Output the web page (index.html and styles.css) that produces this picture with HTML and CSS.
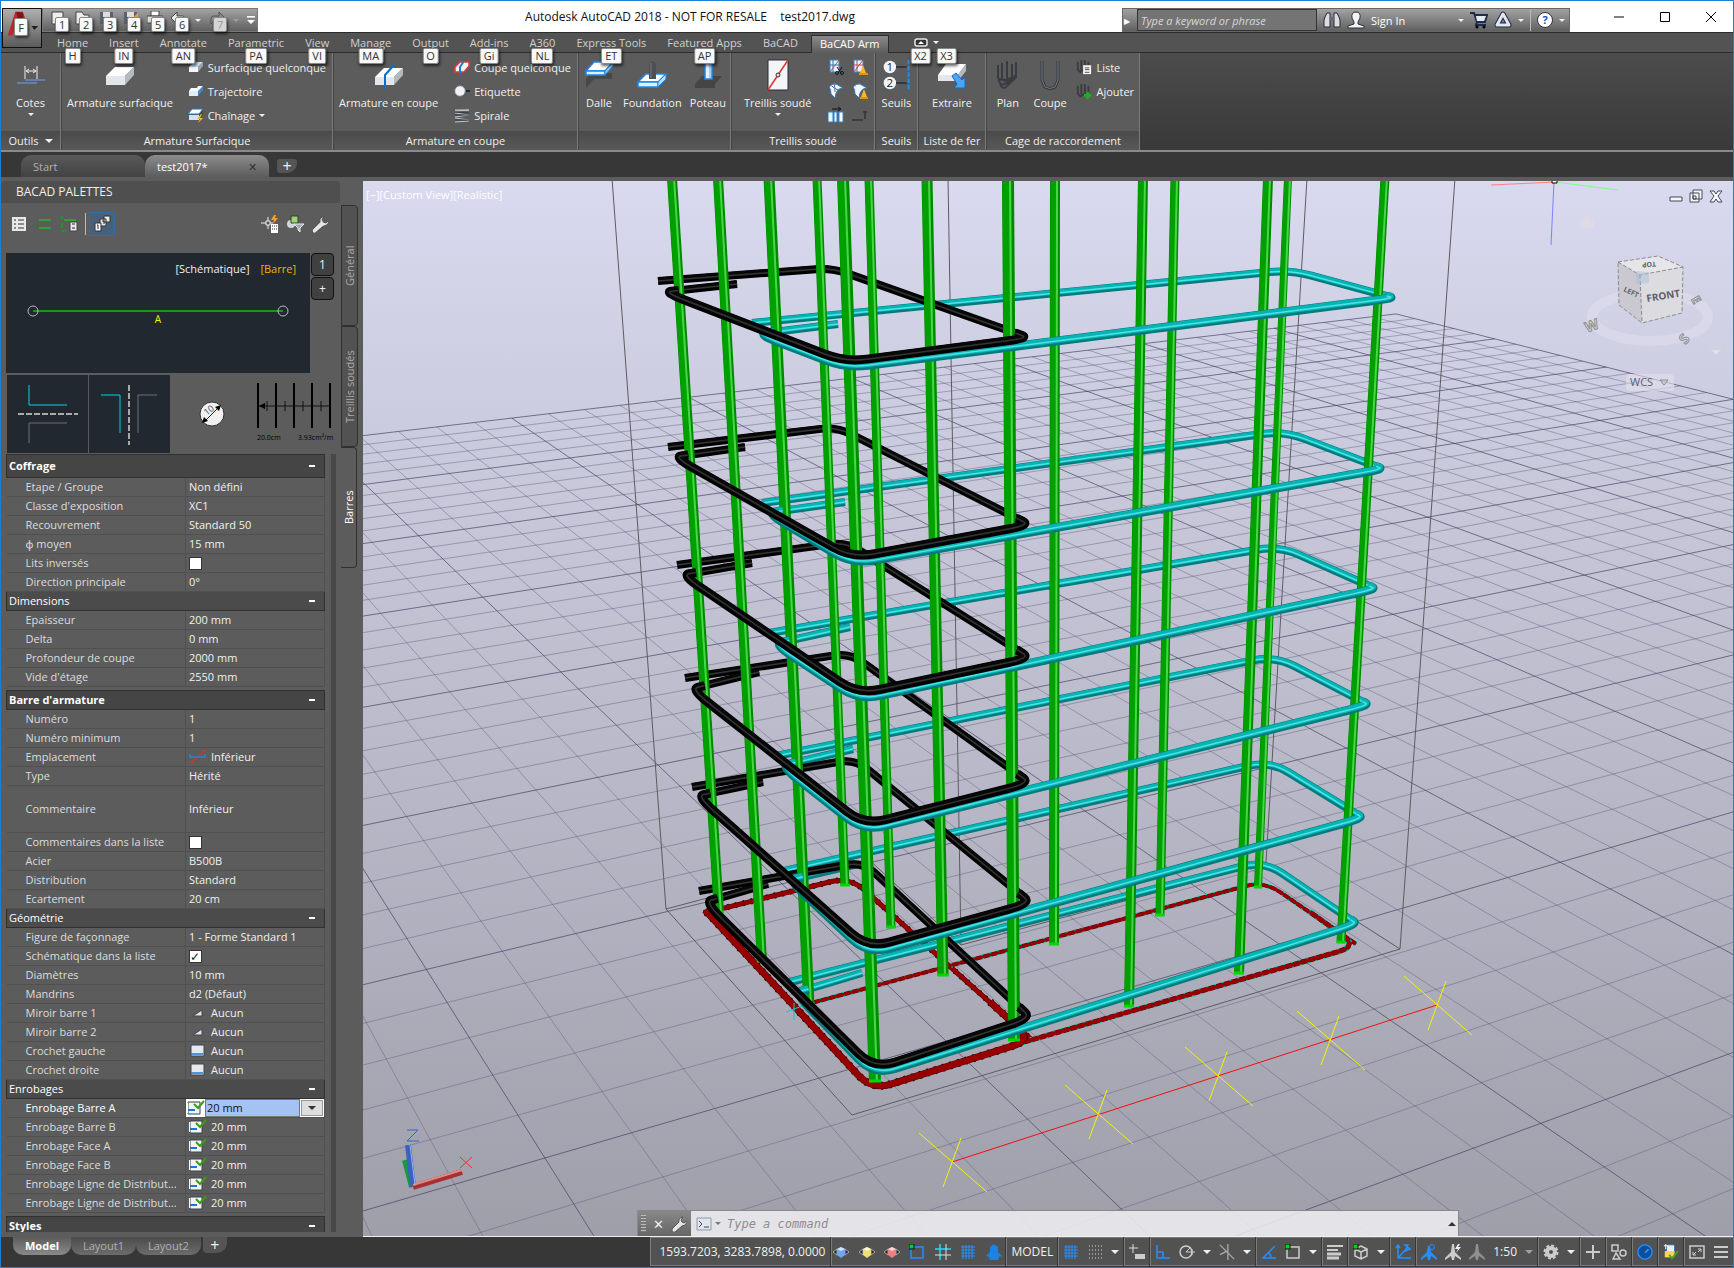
FILE: index.html
```html
<!DOCTYPE html>
<html lang="fr">
<head>
  <meta charset="UTF-8" />
  <meta name="viewport" content="width=device-width, initial-scale=1.0" />
  <title>Autodesk AutoCAD 2018 - test2017.dwg</title>
  <link rel="stylesheet" href="styles.css">
</head>

<body>
  <!-- Icons -->
  <svg class="defs" aria-hidden="true">
    <symbol id="i-slab" viewBox="0 0 32 28"><path d="M2 15l9-9h19l-9 9z" fill="#fdfdfd"/><path d="M2 15h19v9H2z" fill="#e3e6ea"/><path d="M21 15l9-9v8l-9 10z" fill="#b4b9c0"/></symbol>
    <symbol id="i-slabcut" viewBox="0 0 32 28"><path d="M2 16l9-9h19l-9 9z" fill="#fdfdfd"/><path d="M2 16h19v8H2z" fill="#e3e6ea"/><path d="M21 16l9-9v7l-9 10z" fill="#b4b9c0"/><path d="M21 4L12 14v14" fill="none" stroke="#0a6fd0" stroke-width="2"/></symbol>
    <symbol id="i-dim" viewBox="0 0 32 28"><path d="M10 5v13M22 5v13M12 10h8M14 8l-3 2 3 2M18 8l3 2-3 2" fill="none" stroke="#eee"/><path d="M10 19h20M2 22h20" stroke="#6fa0ee" stroke-width="1"/></symbol>
    <symbol id="i-poly" viewBox="0 0 16 16"><path d="M1 8l5-5h9l-5 5z" fill="#c4e2f4"/><path d="M1 8h9v5H1z" fill="#f4f6f8"/><path d="M10 8l5-5v4l-5 6z" fill="#9ba2ab"/></symbol>
    <symbol id="i-traj" viewBox="0 0 16 16"><path d="M1 8l2-3h6l1-2h5l-4 5z" fill="#fff"/><path d="M1 8h9v5H1z" fill="#dcefff"/><path d="M10 8l5-5v4l-5 6z" fill="#4388c8"/></symbol>
    <symbol id="i-chain" viewBox="0 0 16 16"><path d="M0 7l4-5h11l-4 5z" fill="#fff" stroke="#1673c8"/><path d="M1 8h10v5H1z" fill="#cfe5f6"/><path d="M11 8l4-5v4l-4 6z" fill="#3b4655"/><path d="M13 7l-4 5h3l-2 4 5-5h-3l2-4z" fill="#ffb52b"/></symbol>
    <symbol id="i-cutany" viewBox="0 0 16 16"><path d="M1 8l5-5h9v4l-5 6H1z" fill="#f2f2f2" stroke="#e23a3a" stroke-width="1.5"/><path d="M10 2L6 8v7" fill="none" stroke="#1c7ad6" stroke-width="2"/></symbol>
    <symbol id="i-tag" viewBox="0 0 16 16"><circle cx="6" cy="8" r="5" fill="#f0f2f4" stroke="#aeb4bb" stroke-dasharray="2 1"/><path d="M12 8h4" stroke="#222a35" stroke-width="2"/></symbol>
    <symbol id="i-spiral" viewBox="0 0 16 16"><path d="M1 3h14M1 6l14 2M1 10l14-2M1 11l14 2M1 15l14-1M1 4l14-1" stroke="#c4c8cd" fill="none"/><path d="M1 5l14 1M1 8h14M1 13h14" stroke="#333b46"/></symbol>
    <symbol id="i-dalle" viewBox="0 0 32 32"><path d="M3 20v9l8-9h18v-6H8z" fill="#484848"/><path d="M3 12l8-9h19l-8 9z" fill="#fff" stroke="#1d87e8" stroke-width="1.5"/><path d="M3 12h19v4H3z" fill="#dff0fd" stroke="#1d87e8" stroke-width="1.5"/><path d="M22 12l8-9v4l-8 9z" fill="#8cc4f2" stroke="#1d87e8"/></symbol>
    <symbol id="i-found" viewBox="0 0 32 32"><path d="M2 23l8-8h20l-8 8z" fill="#fff" stroke="#1d87e8" stroke-width="1.5"/><path d="M2 23h20v5H2z" fill="#dff0fd" stroke="#1d87e8" stroke-width="1.5"/><path d="M22 23l8-8v5l-8 8z" fill="#b7daf6" stroke="#1d87e8"/><path d="M13 4q3-3 7 0v16h-7z" fill="#4c4f54"/><path d="M15 4v15" stroke="#777b80"/></symbol>
    <symbol id="i-post" viewBox="0 0 32 32"><path d="M3 25l7-8h20l-7 8v4H3z" fill="#454545"/><path d="M13 3q3-3 7 0v17h-7z" fill="#e4f2fe" stroke="#1d87e8" stroke-width="1.5"/><path d="M18 4v15" stroke="#9fcdf4" stroke-width="2"/></symbol>
    <symbol id="i-mesh" viewBox="0 0 24 32"><path d="M2 1h20v30H2z" fill="#f4f5f6" stroke="#272f3a"/><path d="M2 31L22 1" stroke="#e23434" stroke-width="1.5"/><circle cx="12" cy="16" r="2" fill="#ddd" stroke="#333"/></symbol>
    <symbol id="i-msel" viewBox="0 0 16 16"><path d="M2 1h9v12H2z" fill="#e9f3fb" stroke="#3585cc"/><path d="M5 1v12M2 6h9" stroke="#356fae" fill="none"/><path d="M2 13L11 1" stroke="#c34b4b"/><path d="M9 8l4 6M14 8l-4 6" stroke="#151515"/><circle cx="9" cy="14" r="1.5" fill="none" stroke="#151515"/><circle cx="14" cy="14" r="1.5" fill="none" stroke="#151515"/></symbol>
    <symbol id="i-mwarn" viewBox="0 0 16 16"><path d="M2 1h9v12H2z" fill="#e9f3fb" stroke="#3585cc"/><path d="M2 13L11 1M5 1v12M2 6h9" stroke="#c34b4b" fill="none"/><path d="M11 6l3 8h-6z" fill="#ffb52b"/><path d="M7 14h9v2H7z" fill="#e88f12"/></symbol>
    <symbol id="i-fold" viewBox="0 0 16 16"><path d="M1 4q4-4 7-3l7 4q-7 0-8 10L3 11q0-5-2-7z" fill="#f1f6fb" stroke="#3a78bb"/><path d="M4 3q4 2 3 6M7 1q-2 4 3 6" stroke="#3566a6" fill="none"/></symbol>
    <symbol id="i-foldw" viewBox="0 0 16 16"><path d="M1 4q4-4 7-3l7 4q-7 0-8 10L3 11q0-5-2-7z" fill="#f1f6fb" stroke="#3a78bb"/><path d="M12 6l3 8H9z" fill="#ffb52b"/><path d="M8 14h8v2H8z" fill="#e88f12"/></symbol>
    <symbol id="i-cols" viewBox="0 0 16 16"><path d="M0 5h5v10H0zM6 5h3v10H6z" fill="#e9f3fb" stroke="#3585cc"/><path d="M11 5h4v10h-4z" fill="#fff" stroke="#3585cc"/><path d="M4 2h8M10 0l3 2-3 2" stroke="#111" fill="none"/></symbol>
    <symbol id="i-line" viewBox="0 0 16 16"><path d="M0 13h11M13 12V4M11 5h4" stroke="#30353c" stroke-width="1.5" fill="none"/></symbol>
    <symbol id="i-extract" viewBox="0 0 32 28"><path d="M2 14l8-11h20l-8 11z" fill="#fdfdfd"/><path d="M2 14h20v6H2z" fill="#e3e6ea"/><path d="M22 14l8-11v7l-8 10z" fill="#b4b9c0"/><path d="M16 15l4-3 6 7 3-3v11H18l3-4z" fill="#4aa5f5" stroke="#1568c0"/></symbol>
    <symbol id="i-plan" viewBox="0 0 24 32"><path d="M2 6v12l3 9q3 4 6 0l9-9V3M6 4v15q2 5 5 1V2M11 20l5-1V5M3 20l10 2 7-6M5 26l9-3" fill="none" stroke="#383c42" stroke-width="2"/></symbol>
    <symbol id="i-coupe" viewBox="0 0 24 32"><path d="M4 2v19l3 7q5 3 10 0l3-7V2" fill="none" stroke="#333940" stroke-width="3"/><path d="M4 2v19l3 7q5 3 10 0l3-7V2" fill="none" stroke="#767a80"/></symbol>
    <symbol id="i-liste" viewBox="0 0 18 18"><path d="M2 3v9l3 3 3-3M6 1v12M10 1v6M14 3v4" fill="none" stroke="#383c42" stroke-width="2"/><path d="M8 7h9v10H8z" fill="#f3f3f3"/><path d="M10 10h5M10 12h5M10 15h5" stroke="#444"/></symbol>
    <symbol id="i-ajout" viewBox="0 0 18 18"><path d="M2 3v9l3 3 5-3M6 1v12M10 1v12M14 3v9" fill="none" stroke="#383c42" stroke-width="2"/><path d="M13 10v8M9 14h8" stroke="#19b219" stroke-width="3"/></symbol>
    <symbol id="i-wrench" viewBox="0 0 16 16"><path d="M1 13L8 6q-1-4 4-5l-2 3 1 2 2 1 3-2q0 4-5 5l-7 6q-3 1-3-3z" fill="#e6e6e6" stroke="#555"/></symbol>
    <symbol id="i-check" viewBox="0 0 18 16"><path d="M1 2h12v12H1z" fill="#f2f3f5" stroke="#3a4450"/><path d="M0 3v10" stroke="#fff" stroke-width="2"/><path d="M1 10h7" stroke="#1878d8" stroke-width="2"/><path d="M7 4l4 4 6-7" fill="none" stroke="#3d9a17" stroke-width="2"/></symbol>
    <symbol id="i-hook" viewBox="0 0 16 16"><path d="M1 2h13v11H1z" fill="#e6e9ec" stroke="#3a4450"/><path d="M1 11h12" stroke="#1878d8" stroke-width="1.5"/></symbol>
    <symbol id="i-tri" viewBox="0 0 16 16"><path d="M3 11l9-6v6z" fill="#e3e5e8" stroke="#3f454d"/></symbol>
    <symbol id="i-pos" viewBox="0 0 18 16"><path d="M3 13L15 2" stroke="#c23b33" stroke-width="1.5"/><circle cx="15" cy="2" r="1.5" fill="#c23b33"/><circle cx="3" cy="13" r="1.5" fill="#c23b33"/><path d="M1 5v3h15V5" fill="none" stroke="#2a80d8" stroke-width="1.5"/></symbol>
    <symbol id="i-cube" viewBox="0 0 16 16"><path d="M0 8l4-3v6zM16 8l-4-3v6z" fill="#20242a" stroke="#aaa"/><path d="M4 5l4-2 4 2v6l-4 3-4-3z" fill="currentColor"/><path d="M4 5l4-2 4 2-4 2z" fill="#fff" opacity=".7"/></symbol>
    <symbol id="i-snapbox" viewBox="0 0 16 16"><path d="M2 3h12v11H2z" fill="none" stroke="currentColor" stroke-width="1.5"/><path d="M0 0h5v5H0z" fill="#00d21c" stroke="#111"/></symbol>
    <symbol id="i-hash" viewBox="0 0 16 16"><path d="M5 0v16M0 5h16" stroke="#19e0f0" stroke-width="1.5"/><path d="M11 0v16M0 11h16" stroke="#ddd"/></symbol>
    <symbol id="i-grid" viewBox="0 0 16 16"><path d="M3 1v14M6 1v14M9 1v14M12 1v14M1 3h14M1 6h14M1 9h14M1 12h14" stroke="currentColor" stroke-width="1"/></symbol>
    <symbol id="i-dots" viewBox="0 0 16 16"><path d="M2 2h13M2 6h13M2 10h13M2 14h13" stroke="#ddd" stroke-dasharray="1 2"/></symbol>
    <symbol id="i-ghost" viewBox="0 0 16 16"><path d="M4 3q4-5 8 0v5l4 4-3 1-1 3H4l-1-3-3-1 4-4z" fill="#1e82e0"/></symbol>
    <symbol id="i-dyn" viewBox="0 0 16 16"><path d="M4 0v9M0 4h9" stroke="#ddd"/><path d="M6 10h10v5H6z" fill="#ccc"/></symbol>
    <symbol id="i-ortho" viewBox="0 0 16 16"><path d="M2 1v13h13M2 8h6v6" fill="none" stroke="currentColor" stroke-width="1.5"/></symbol>
    <symbol id="i-polar" viewBox="0 0 16 16"><circle cx="7" cy="8" r="6" fill="none" stroke="#ccc" stroke-width="1.5"/><path d="M7 8h9M7 8l5-5M13 5v6" stroke="#ccc" fill="none"/></symbol>
    <symbol id="i-iso" viewBox="0 0 18 18"><path d="M1 1l16 16M1 12l8-4M10 0v18" stroke="#aaa" stroke-width="1.5" fill="none"/></symbol>
    <symbol id="i-angle" viewBox="0 0 16 16"><path d="M15 14H2L14 2M7 9q3 1 3 5" fill="none" stroke="currentColor" stroke-width="1.5"/></symbol>
    <symbol id="i-lwt" viewBox="0 0 16 16"><path d="M0 2h16M0 6h11" stroke="#ccc" stroke-width="2"/><path d="M0 10h14M0 14h12" stroke="#ccc" stroke-width="3"/></symbol>
    <symbol id="i-box3" viewBox="0 0 16 16"><path d="M8 2l6 3v7l-6 3-6-3V5zM8 8v7M8 8l6-3M8 8L2 5" fill="none" stroke="#ccc" stroke-width="1.5"/><path d="M0 0h5v5H0z" fill="#00d21c" stroke="#111"/></symbol>
    <symbol id="i-ucs" viewBox="0 0 16 16"><path d="M3 1v13h13M3 14L13 3M1 4l2-3 2 3M10 1l5 4-5 2 3-6z" fill="none" stroke="currentColor" stroke-width="1.5"/></symbol>
    <symbol id="i-anno" viewBox="0 0 16 16"><path d="M7 0h2l1 8 6 6v2l-6-4-1 4H7l-1-4-6 4v-2l6-6z" fill="currentColor"/></symbol>
    <symbol id="i-annov" viewBox="0 0 16 16"><path d="M7 2h2l1 6 6 6v2l-6-4-1 4H7l-1-4-6 4v-2l6-6z" fill="currentColor"/><circle cx="11" cy="3" r="2.500" fill="#525252" stroke="currentColor"/></symbol>
    <symbol id="i-annob" viewBox="0 0 16 16"><path d="M7 0h2l1 8 6 6v2l-6-4-1 4H7l-1-4-6 4v-2l6-6z" fill="currentColor"/><path d="M13 0l-3 5h3l-2 4 5-6h-3l2-3z" fill="#eee"/></symbol>
    <symbol id="i-gear" viewBox="0 0 16 16"><circle cx="8" cy="8" r="4" fill="none" stroke="#ccc" stroke-width="4"/><circle cx="8" cy="8" r="6.500" fill="none" stroke="#ccc" stroke-width="2" stroke-dasharray="3 2"/></symbol>
    <symbol id="i-plus" viewBox="0 0 16 16"><path d="M8 1v14M1 8h14" stroke="#ccc" stroke-width="2"/></symbol>
    <symbol id="i-shapes" viewBox="0 0 16 16"><path d="M1 1h6v6H1zM2 15l3-6 4 6z" fill="none" stroke="#ccc" stroke-width="1.5"/><circle cx="12" cy="9" r="3" fill="none" stroke="#ccc" stroke-width="1.5"/></symbol>
    <symbol id="i-perf" viewBox="0 0 18 18"><circle cx="9" cy="9" r="8" fill="#0b4f9c" stroke="#2490ff" stroke-width="1.5"/><path d="M9 10l4-4" stroke="#49a4ff" stroke-width="1.5"/></symbol>
    <symbol id="i-trust" viewBox="0 0 18 18"><path d="M4 1h9v9H4z" fill="#e9edf4" stroke="#3d6ab0"/><path d="M2 8h11v7H2z" fill="#ffd54a"/><path d="M1 2h5M3 0v6" stroke="#fff"/><path d="M7 12l3 4 7-8" fill="none" stroke="#3fa51c" stroke-width="2"/></symbol>
    <symbol id="i-full" viewBox="0 0 16 16"><path d="M1 2h14v12H1z" fill="none" stroke="#ccc" stroke-width="1.5"/><path d="M4 11l3-3M4 8v3h3M12 5L9 8M9 5h3v3" stroke="#ccc" fill="none"/></symbol>
    <symbol id="i-menu" viewBox="0 0 16 16"><path d="M1 3h14M1 8h14M1 13h14" stroke="#ccc" stroke-width="2"/></symbol>
  </svg>

  <div class="app">
    <!-- Title bar -->
    <header class="titlebar">
      <button class="app-btn" aria-label="Application menu">
        <svg viewBox="0 0 34 40"><path d="M2 28L10 3h8l6 19-5 2-3-6-6 1-3 9z" fill="#c2262c"/><path d="M11 3l4 16 4-2-1-13z" fill="#7e1216"/><path d="M27 18h7l-4 4z" fill="#15202c"/></svg>
        <span class="keytip tip-f">F</span>
      </button>
      <div class="qat">
        <button aria-label="New"><svg viewBox="0 0 16 16"><path d="M1 1h11v12H1z" fill="#eee" stroke="#444"/></svg><span class="keytip">1</span></button>
        <button aria-label="Open"><svg viewBox="0 0 16 16"><path d="M1 1h6l2 3h5v9H1z" fill="#eee" stroke="#444"/></svg><span class="keytip">2</span></button>
        <button aria-label="Save"><svg viewBox="0 0 16 16"><path d="M1 1h13v12H1z" fill="#59626e"/><path d="M4 1h7v5H4z" fill="#ddd"/></svg><span class="keytip">3</span></button>
        <button aria-label="Save as"><svg viewBox="0 0 16 16"><path d="M1 1h13v12H1z" fill="#59626e"/><path d="M4 1h7v5H4z" fill="#ddd"/><path d="M8 8l7-6v5z" fill="#e8a03a"/></svg><span class="keytip">4</span></button>
        <button aria-label="Plot"><svg viewBox="0 0 16 16"><path d="M4 0h8v5H4z" fill="#fff" stroke="#444"/><path d="M0 5h16v7H0z" fill="#ddd" stroke="#444"/></svg><span class="keytip">5</span></button>
        <button aria-label="Undo"><svg viewBox="0 0 16 16"><path d="M0 7l6-6v4h6q3 1 2 8-2-4-8-3v3z" fill="#eee" stroke="#444"/></svg><span class="keytip">6</span></button>
        <i class="caret"></i>
        <button aria-label="Redo" disabled><svg viewBox="0 0 16 16"><path d="M16 7l-6-6v4H4Q1 6 2 13q2-4 8-3v3z" fill="#888" stroke="#555"/></svg><span class="keytip">7</span></button>
        <i class="caret dim"></i>
        <svg class="qat-more" viewBox="0 0 10 10"><path d="M0 1h10" stroke="#fff" stroke-width="2"/><path d="M0 5h10l-5 5z" fill="#fff"/></svg>
      </div>
      <h1>Autodesk AutoCAD 2018 - NOT FOR RESALE <span>test2017.dwg</span></h1>
      <div class="infocenter">
        <button class="ic-arrow" aria-label="Collapse search">▶</button>
        <input type="text" aria-label="Search" placeholder="Type a keyword or phrase">
        <svg viewBox="0 0 18 18"><path d="M2 6l2-4h3v14H1V9zM16 6l-2-4h-3v14h6V9z" fill="#ddd" stroke="#222b3a"/><path d="M7 6h4v4H7z" fill="#667"/></svg>
        <svg viewBox="0 0 18 18"><path d="M9 1q5 0 4 6l-2 4v2l6 2v2H1v-2l6-2v-2L5 7q-1-6 4-6z" fill="#f2f4f6" stroke="#27303e"/></svg>
        <button class="signin">Sign In</button>
        <i class="caret push"></i>
        <svg viewBox="0 0 18 18"><path d="M0 2h4l3 9h8l2-7H5M7 11l-1 3h10" fill="none" stroke="#1d2b4c" stroke-width="2"/><path d="M6 5h10l-2 5H7z" fill="#e5e8ee"/><circle cx="7" cy="16" r="1.5"/><circle cx="14" cy="16" r="1.5"/></svg>
        <svg viewBox="0 0 18 18"><path d="M9 3l6 11H3z" fill="none" stroke="#1d2b4c" stroke-width="5" stroke-linejoin="round"/><path d="M9 3l6 11H3z" fill="none" stroke="#e2e6ee" stroke-width="3" stroke-linejoin="round"/></svg>
        <i class="caret"></i>
        <b class="sep"></b>
        <button class="help" aria-label="Help">?</button>
        <i class="caret"></i>
      </div>
      <div class="winbtns">
        <button aria-label="Minimize"><svg viewBox="0 0 12 12"><path d="M1 6h10" stroke="#000"/></svg></button>
        <button aria-label="Maximize"><svg viewBox="0 0 12 12"><path d="M1.500 1.500h9v9h-9z" fill="none" stroke="#000"/></svg></button>
        <button aria-label="Close"><svg viewBox="0 0 12 12"><path d="M1 1l10 10M11 1L1 11" stroke="#000"/></svg></button>
      </div>
    </header>

    <!-- Ribbon tabs -->
    <nav class="tabs">
      <a href="#">Home<span class="keytip">H</span></a>
      <a href="#">Insert<span class="keytip">IN</span></a>
      <a href="#">Annotate<span class="keytip">AN</span></a>
      <a href="#">Parametric<span class="keytip">PA</span></a>
      <a href="#">View<span class="keytip">VI</span></a>
      <a href="#">Manage<span class="keytip">MA</span></a>
      <a href="#">Output<span class="keytip">O</span></a>
      <a href="#">Add-ins<span class="keytip">Gi</span></a>
      <a href="#">A360<span class="keytip">NL</span></a>
      <a href="#">Express Tools<span class="keytip">ET</span></a>
      <a href="#">Featured Apps<span class="keytip">AP</span></a>
      <a href="#">BaCAD</a>
      <a href="#" class="active">BaCAD Arm</a>
      <button class="minrib" aria-label="Minimize ribbon"><svg viewBox="0 0 14 9"><rect x="1" y="1" width="12" height="7" rx="2" fill="#333" stroke="#e8e8e8" stroke-width="1.5"/><path d="M4 6l3-3 3 3z" fill="#fff"/></svg><span class="keytip">X2</span></button>
      <button class="minrib2" aria-label="Ribbon options"><i class="caret"></i><span class="keytip">X3</span></button>
    </nav>

    <!-- Ribbon -->
    <section class="ribbon">
      <div class="panel p-outils">
        <div class="tools"><button class="big"><svg><use href="#i-dim"/></svg>Cotes<i class="caret"></i></button></div>
        <h2>Outils <i class="caret wide"></i></h2>
      </div>
      <div class="panel p-surf">
        <div class="tools">
          <button class="big"><svg><use href="#i-slab"/></svg>Armature surfacique</button>
          <div class="col">
            <button><svg><use href="#i-poly"/></svg>Surfacique quelconque</button>
            <button><svg><use href="#i-traj"/></svg>Trajectoire</button>
            <button><svg><use href="#i-chain"/></svg>Chaînage <i class="caret"></i></button>
          </div>
        </div>
        <h2>Armature Surfacique</h2>
      </div>
      <div class="panel p-coupe">
        <div class="tools">
          <button class="big"><svg><use href="#i-slabcut"/></svg>Armature en coupe</button>
          <div class="col">
            <button><svg><use href="#i-cutany"/></svg>Coupe quelconque</button>
            <button><svg><use href="#i-tag"/></svg>Etiquette</button>
            <button><svg><use href="#i-spiral"/></svg>Spirale</button>
          </div>
        </div>
        <h2>Armature en coupe</h2>
      </div>
      <div class="panel p-elem">
        <div class="tools">
          <button class="big"><svg><use href="#i-dalle"/></svg>Dalle</button>
          <button class="big"><svg><use href="#i-found"/></svg>Foundation</button>
          <button class="big"><svg><use href="#i-post"/></svg>Poteau</button>
        </div>
        <h2>&nbsp;</h2>
      </div>
      <div class="panel p-mesh">
        <div class="tools">
          <button class="big"><svg><use href="#i-mesh"/></svg>Treillis soudé<i class="caret"></i></button>
          <div class="icons">
            <button aria-label="Couper treillis"><svg><use href="#i-msel"/></svg></button>
            <button aria-label="Contrôler treillis"><svg><use href="#i-mwarn"/></svg></button>
            <button aria-label="Plier treillis"><svg><use href="#i-fold"/></svg></button>
            <button aria-label="Contrôler pliage"><svg><use href="#i-foldw"/></svg></button>
            <button aria-label="Répartir"><svg><use href="#i-cols"/></svg></button>
            <button aria-label="Ligne"><svg><use href="#i-line"/></svg></button>
          </div>
        </div>
        <h2>Treillis soudé</h2>
      </div>
      <div class="panel p-seuil">
        <div class="tools"><button class="big"><svg viewBox="0 0 32 36"><circle cx="8" cy="9" r="7" fill="#f3f4f5"/><circle cx="8" cy="27" r="7" fill="#f3f4f5"/><path d="M15 9h12M15 27h12" stroke="#2f3946" stroke-width="2"/><path d="M29 1v34" stroke="#2090f0" stroke-width="2" stroke-dasharray="5 2"/><text x="8" y="14">1</text><text x="8" y="32">2</text></svg>Seuils</button></div>
        <h2>Seuils</h2>
      </div>
      <div class="panel p-liste">
        <div class="tools"><button class="big"><svg><use href="#i-extract"/></svg>Extraire</button></div>
        <h2>Liste de fer</h2>
      </div>
      <div class="panel p-cage">
        <div class="tools">
          <button class="big"><svg><use href="#i-plan"/></svg>Plan</button>
          <button class="big"><svg><use href="#i-coupe"/></svg>Coupe</button>
          <div class="col">
            <button><svg><use href="#i-liste"/></svg>Liste</button>
            <button><svg><use href="#i-ajout"/></svg>Ajouter</button>
          </div>
        </div>
        <h2>Cage de raccordement</h2>
      </div>
    </section>

    <!-- Drawing tabs -->
    <nav class="files">
      <a href="#">Start</a>
      <a href="#" class="active">test2017*<span>✕</span></a>
      <button aria-label="New drawing">+</button>
    </nav>

    <main>
      <!-- Palette -->
      <aside class="palette">
        <h2>BACAD PALETTES</h2>
        <div class="pal-body">
          <div class="pal-main">
            <div class="pal-tools">
              <button aria-label="Liste"><svg viewBox="0 0 18 18"><path d="M2 2h14v14H2z" fill="#e8e8e8"/><path d="M4 5h2M4 9h2M4 13h2M8 5h6M8 9h6M8 13h6" stroke="#333"/></svg></button>
              <button aria-label="Barre"><svg viewBox="0 0 18 18"><path d="M4 5h12M4 13h12" stroke="#00e800"/><path d="M3 7l-1 3 1 2" stroke="#0a8a0a" fill="none"/></svg></button>
              <button aria-label="Calcul"><svg viewBox="0 0 18 18"><path d="M4 5h12" stroke="#00e800"/><path d="M2 1v4M2 8v8h4" stroke="#00b800" fill="none" stroke-dasharray="5 2"/><path d="M10 7h7v9h-7z" fill="#e8e8e8" stroke="#444"/><path d="M12 9h3M12 13h3" stroke="#225"/></svg></button>
              <b class="sep"></b>
              <button class="on" aria-label="Numérotation"><svg viewBox="0 0 18 18"><path d="M11 1h6v6h-6zM7 4h6v7H7z" fill="#e8e8e8" stroke="#333"/><path d="M2 8h6v8H2z" fill="#f4f4f4" stroke="#333"/><path d="M4 10l1 0v4M9 6h2v3" stroke="#333" fill="none"/></svg></button>
              <span class="grow"></span>
              <button aria-label="Sélection rapide"><svg viewBox="0 0 18 18"><path d="M0 8h12M7 2v12" stroke="#eee"/><path d="M5 6h4v4H5z" fill="#555" stroke="#eee"/><path d="M13 0l-3 5h3l-1 4 5-6h-3l1-3z" fill="#ff9d1c"/><path d="M10 9h7v9h-7z" fill="#fff"/><path d="M11 11h5M11 14h5" stroke="#222" stroke-dasharray="1 1"/></svg></button>
              <button aria-label="Filtre"><svg viewBox="0 0 18 18"><circle cx="5" cy="9" r="4" fill="#d4d6d8"/><path d="M5 1h7v7H5z" fill="#9fd27a" stroke="#2b4420"/><path d="M8 9h10l-4 4v4l-2-2v-2z" fill="#9aa6b8" stroke="#eee"/></svg></button>
              <button aria-label="Options"><svg><use href="#i-wrench"/></svg></button>
            </div>
            <div class="preview">
              <div class="schema">
                <p><a href="#">[Schématique]</a> <a href="#" class="cur">[Barre]</a></p>
                <svg viewBox="0 0 304 60"><path d="M27 17h250" stroke="#18961a" stroke-width="2"/><circle cx="27" cy="17" r="5"/><circle cx="277" cy="17" r="5"/><text x="152" y="29">A</text></svg>
              </div>
              <div class="schema-btns"><button>1</button><button aria-label="Ajouter">+</button></div>
            </div>
            <div class="thumbs">
              <button aria-label="Miroir horizontal"><svg viewBox="0 0 81 78"><path d="M22 10v20h38" stroke="#00d8e0"/><path d="M11 39h60" stroke="#aaa" stroke-width="2" stroke-dasharray="6 2"/><path d="M22 68V48h38" stroke="#707070"/></svg></button>
              <button aria-label="Miroir vertical"><svg viewBox="0 0 81 78"><path d="M12 20h19v38" stroke="#00d8e0"/><path d="M40 10v60" stroke="#aaa" stroke-width="2" stroke-dasharray="6 2"/><path d="M68 20H49v38" stroke="#707070"/></svg></button>
              <svg class="diam" viewBox="0 0 26 26"><circle cx="13" cy="13" r="12" fill="#f1f1f1" stroke="#333"/><path d="M5 21L21 5" stroke="#222"/><path d="M3 22l2-6 4 4zM22 4l-2 6-4-4z" fill="#000"/><text x="5" y="13" transform="rotate(-38 9 10)">10</text></svg>
              <svg class="pitch" viewBox="0 0 80 64"><path d="M4 1v45M22 1v45M40 1v45M58 1v45M76 1v45" stroke="#000" stroke-width="2"/><path d="M5 24h71M13 19v10M31 19v10M49 19v10M67 19v10" stroke="#111"/><path d="M5 24l6-3v6z"/><text x="3" y="58">20.0cm</text><text x="44" y="58">3.93cm²/m</text></svg>
            </div>
            <div class="props">
              <table>
                <colgroup><col class="c-name"><col></colgroup>
                <tr class="cat strong first"><th colspan="2">Coffrage<i></i></th></tr>
                <tr><th>Etape / Groupe</th><td>Non défini</td></tr>
                <tr><th>Classe d'exposition</th><td>XC1</td></tr>
                <tr><th>Recouvrement</th><td>Standard 50</td></tr>
                <tr><th>ϕ moyen</th><td>15 mm</td></tr>
                <tr><th><label for="lits">Lits inversés</label></th><td><input type="checkbox" id="lits"></td></tr>
                <tr><th>Direction principale</th><td>0°</td></tr>
                <tr class="cat"><th colspan="2">Dimensions<i></i></th></tr>
                <tr><th>Epaisseur</th><td>200 mm</td></tr>
                <tr><th>Delta</th><td>0 mm</td></tr>
                <tr><th>Profondeur de coupe</th><td>2000 mm</td></tr>
                <tr><th>Vide d'étage</th><td>2550 mm</td></tr>
              </table>
              <table>
                <colgroup><col class="c-name"><col></colgroup>
                <tr class="cat strong"><th colspan="2">Barre d'armature<i></i></th></tr>
                <tr><th>Numéro</th><td>1</td></tr>
                <tr><th>Numéro minimum</th><td>1</td></tr>
                <tr><th>Emplacement</th><td><svg><use href="#i-pos"/></svg>Inférieur</td></tr>
                <tr><th>Type</th><td>Hérité</td></tr>
                <tr class="tall"><th>Commentaire</th><td>Inférieur</td></tr>
                <tr><th><label for="comm">Commentaires dans la liste</label></th><td><input type="checkbox" id="comm"></td></tr>
                <tr><th>Acier</th><td>B500B</td></tr>
                <tr><th>Distribution</th><td>Standard</td></tr>
                <tr><th>Ecartement</th><td>20 cm</td></tr>
                <tr class="cat"><th colspan="2">Géométrie<i></i></th></tr>
                <tr><th>Figure de façonnage</th><td>1 - Forme Standard 1</td></tr>
                <tr><th><label for="sch">Schématique dans la liste</label></th><td><input type="checkbox" id="sch" checked></td></tr>
                <tr><th>Diamètres</th><td>10 mm</td></tr>
                <tr><th>Mandrins</th><td>d2 (Défaut)</td></tr>
                <tr><th>Miroir barre 1</th><td><svg><use href="#i-tri"/></svg>Aucun</td></tr>
                <tr><th>Miroir barre 2</th><td><svg><use href="#i-tri"/></svg>Aucun</td></tr>
                <tr><th>Crochet gauche</th><td><svg><use href="#i-hook"/></svg>Aucun</td></tr>
                <tr><th>Crochet droite</th><td><svg><use href="#i-hook"/></svg>Aucun</td></tr>
                <tr class="cat"><th colspan="2">Enrobages<i></i></th></tr>
                <tr class="edit"><th><label for="enra">Enrobage Barre A</label></th><td><div class="combo"><svg><use href="#i-check"/></svg><select id="enra"><option>20 mm</option></select><i></i></div></td></tr>
                <tr><th>Enrobage Barre B</th><td><svg><use href="#i-check"/></svg>20 mm</td></tr>
                <tr><th>Enrobage Face A</th><td><svg><use href="#i-check"/></svg>20 mm</td></tr>
                <tr><th>Enrobage Face B</th><td><svg><use href="#i-check"/></svg>20 mm</td></tr>
                <tr><th>Enrobage Ligne de Distribut...</th><td><svg><use href="#i-check"/></svg>20 mm</td></tr>
                <tr><th>Enrobage Ligne de Distribut...</th><td><svg><use href="#i-check"/></svg>20 mm</td></tr>
              </table>
              <table>
                <tr class="cat strong"><th colspan="2">Styles<i></i></th></tr>
              </table>
            </div>
          </div>
          <nav class="side-tabs">
            <a href="#">Général</a>
            <a href="#">Treillis soudés</a>
            <a href="#" class="active">Barres</a>
          </nav>
        </div>
      </aside>

      <!-- Model space -->
      <section class="view">
        <svg id="scene" viewBox="363 181 1370 1056" preserveAspectRatio="xMinYMin slice" role="img" aria-label="Ferraillage 3D"></svg>
        <p class="vp-label">[−][Custom View][Realistic]</p>
        <div class="vp-btns">
          <button aria-label="Minimize view"><svg viewBox="0 0 14 14"><path d="M1 8h12v4H1z"/></svg></button>
          <button aria-label="Restore view"><svg viewBox="0 0 14 14"><path d="M4 1h9v9H4zM1 4h9v9H1zM4 7h3v3H4z"/></svg></button>
          <button aria-label="Close view"><svg viewBox="0 0 14 14"><path d="M1 2h4l2 3 2-3h4L9 7l4 6H9L7 10l-2 3H1l4-6z"/></svg></button>
        </div>
        <div class="cmd">
          <div class="cmd-grip"><b></b><button aria-label="Close command line">✕</button><svg><use href="#i-wrench"/></svg></div>
          <svg class="prompt" viewBox="0 0 16 14"><path d="M1 1h14v12H1z" fill="#dfe5ec" stroke="#8f99a6"/><path d="M3 4l3 3-3 3M8 10h5" fill="none" stroke="#445"/></svg>
          <i class="caret grey"></i>
          <input type="text" aria-label="Command" placeholder="Type a command">
          <i class="caret up"></i>
        </div>
      </section>
    </main>

    <!-- Status bar -->
    <footer>
      <nav class="layouts">
        <a href="#" class="active">Model</a>
        <a href="#">Layout1</a>
        <a href="#">Layout2</a>
        <button aria-label="New layout">+</button>
      </nav>
      <div class="status">
        <output>1593.7203, 3283.7898, 0.0000</output>
        <div class="grp g7">
          <svg class="c-blue"><use href="#i-cube"/></svg><svg class="c-yel"><use href="#i-cube"/></svg><svg class="c-red"><use href="#i-cube"/></svg>
          <svg class="on"><use href="#i-snapbox"/></svg><svg><use href="#i-hash"/></svg><svg class="on"><use href="#i-grid"/></svg><svg><use href="#i-ghost"/></svg>
        </div>
        <button class="grp">MODEL</button>
        <div class="grp"><svg class="on"><use href="#i-grid"/></svg><svg><use href="#i-dots"/></svg><i class="caret wide"></i></div>
        <div class="grp"><svg><use href="#i-dyn"/></svg></div>
        <div class="grp"><svg class="on"><use href="#i-ortho"/></svg><svg><use href="#i-polar"/></svg><i class="caret wide"></i><svg><use href="#i-iso"/></svg><i class="caret wide"></i></div>
        <div class="grp"><svg class="on"><use href="#i-angle"/></svg><svg><use href="#i-snapbox"/></svg><i class="caret wide"></i></div>
        <div class="grp"><svg><use href="#i-lwt"/></svg></div>
        <div class="grp"><svg><use href="#i-box3"/></svg><i class="caret wide"></i></div>
        <div class="grp"><svg class="on"><use href="#i-ucs"/></svg></div>
        <div class="grp"><svg class="on"><use href="#i-annov"/></svg><svg><use href="#i-annob"/></svg><svg class="off"><use href="#i-anno"/></svg><button>1:50</button><i class="caret wide dim"></i></div>
        <div class="grp"><svg><use href="#i-gear"/></svg><i class="caret wide"></i></div>
        <div class="grp"><svg><use href="#i-plus"/></svg></div>
        <div class="grp"><svg><use href="#i-shapes"/></svg></div>
        <div class="grp"><svg><use href="#i-perf"/></svg></div>
        <div class="grp"><svg><use href="#i-trust"/></svg></div>
        <div class="grp"><svg><use href="#i-full"/></svg><svg><use href="#i-menu"/></svg></div>
      </div>
    </footer>
  </div>

  <script src="scene.js"></script>
</body>
</html>
```
FILE: styles.css
```css
* {
  box-sizing: border-box;
}

body {
  margin: 0;
  font-family: 'Open Sans', 'Noto Sans', sans-serif;
  font-size: 11px;
  color: #f0f0f0;
  background: #3a3a3a;
}

button, input, select {
  font: inherit;
  color: inherit;
  background: none;
  border: none;
  padding: 0;
  margin: 0;
}

a {
  color: inherit;
  text-decoration: none;
}

h1, h2, p {
  margin: 0;
  font-size: 11px;
  font-weight: 400;
}

svg {
  width: 16px;
  height: 16px;
  flex: none;
}

.defs {
  position: absolute;
  width: 0;
  height: 0;
}

.app {
  display: flex;
  flex-direction: column;
  height: 100vh;
  border: 1px solid #1b7fd4;
}

.caret {
  flex: none;
  border: 3px solid transparent;
  border-top-color: #f0f0f0;
  border-bottom: none;
}

.caret.wide {
  border-width: 4px;
  border-bottom: none;
}

.caret.dim {
  border-top-color: #a0a0a0;
}

.caret.grey {
  border-top-color: #777;
}

.caret.up {
  border: 4px solid transparent;
  border-top: none;
  border-bottom-color: #333;
}

.keytip {
  position: absolute;
  z-index: 5;
  min-width: 14px;
  height: 16px;
  padding: 0 3px;
  font-size: 11px;
  line-height: 14px;
  text-align: center;
  color: #333;
  background: #f8f8f8;
  border: 1px solid #888;
  border-radius: 2px;
  box-shadow: 1px 2px 3px rgba(0,0,0,0.6);
}

/* Title bar */
.titlebar {
  position: relative;
  display: flex;
  align-items: flex-end;
  height: 31px;
  background: #fff;
  color: #111;
}

.app-btn {
  position: absolute;
  left: 1px;
  top: 7px;
  z-index: 6;
  width: 40px;
  height: 40px;
  border: 1px solid #111;
  background: linear-gradient(#b0b0b0, #5a5a5a);
}

.app-btn svg {
  width: 36px;
  height: 38px;
}

.tip-f {
  left: 11px;
  top: 9px;
  height: 18px;
  line-height: 17px;
}

.qat {
  display: flex;
  align-items: center;
  gap: 8px;
  height: 24px;
  margin-left: 41px;
  padding: 0 2px 0 8px;
  border: 1px solid #777;
  background: linear-gradient(#a2a2a2, #606060);
}

.qat button {
  position: relative;
  width: 16px;
  height: 18px;
}

.qat .keytip {
  left: 4px;
  top: 6px;
  height: 15px;
}

.qat button:disabled .keytip {
  color: #999;
  background: #d5d5d5;
}

.qat-more {
  width: 8px;
  height: 8px;
}

.titlebar h1 {
  flex: 1;
  align-self: center;
  text-align: center;
  font-size: 12px;
}

.titlebar h1 span {
  margin-left: 10px;
}

.infocenter {
  display: flex;
  align-items: center;
  gap: 6px;
  width: 448px;
  height: 24px;
  padding-right: 4px;
  border: 1px solid #666;
  background: linear-gradient(#a2a2a2, #606060);
  color: #fff;
}

.ic-arrow {
  width: 8px;
  font-size: 8px;
}

.infocenter input {
  width: 180px;
  height: 22px;
  padding: 0 3px;
  font-style: italic;
  background: #747474;
  border: 1px solid #333;
}

input::placeholder {
  color: #d8d8d8;
  opacity: 1;
}

.infocenter svg {
  width: 18px;
  height: 18px;
}

.push {
  margin-left: auto;
}

.sep {
  width: 1px;
  height: 22px;
  background: #bbb;
}

.help {
  width: 16px;
  height: 16px;
  border-radius: 8px;
  font-weight: 700;
  line-height: 14px;
  color: #2050b0;
  background: #fff;
  border: 1px solid #334;
}

.winbtns {
  display: flex;
  gap: 34px;
  align-self: center;
  padding: 0 16px 0 43px;
}

.winbtns svg {
  display: block;
  width: 12px;
  height: 12px;
}

/* Ribbon tabs */
.tabs {
  display: flex;
  gap: 1px;
  height: 21px;
  padding-left: 46px;
  background: #535353;
  border-top: 1px solid #2c2c2c;
  border-bottom: 1px solid #2c2c2c;
  color: #d0d0d0;
}

.tabs a {
  position: relative;
  padding: 0 10px;
  line-height: 20px;
}

.tabs .active {
  height: 18px;
  margin: 2px 0 0 2px;
  padding: 0 8px;
  line-height: 16px;
  color: #fff;
  background: linear-gradient(#8a8a8a, #5d5d5d);
  border: 1px solid #2c2c2c;
  border-bottom: none;
}

.tabs .keytip {
  top: 15px;
  left: 50%;
  transform: translateX(-50%);
}

.minrib, .minrib2 {
  position: relative;
  display: grid;
  place-items: center;
  width: 14px;
  margin-left: 24px;
}

.minrib2 {
  width: 10px;
  margin-left: 2px;
}

.minrib2 .keytip {
  left: 16px;
}

.minrib svg {
  width: 14px;
  height: 9px;
}

/* Ribbon */
.ribbon {
  display: flex;
  height: 99px;
  background: linear-gradient(#4c4c4c, #393939);
  border-bottom: 2px solid #8a8a8a;
}

.panel {
  display: flex;
  flex-direction: column;
  border-right: 1px solid #7a7a7a;
  background: #5c5c5c;
}

.panel + .panel {
  border-left: 1px solid #444;
}

.p-outils { width: 60px; }
.p-surf { width: 272px; }
.p-coupe { width: 245px; }
.p-elem { width: 153px; }
.p-mesh { width: 144px; }
.p-seuil { width: 43px; }
.p-liste { width: 68px; }
.p-cage { width: 154px; }

.panel h2 {
  display: flex;
  align-items: center;
  justify-content: center;
  gap: 6px;
  height: 19px;
  background: linear-gradient(#4b4b4b, #585858);
}

.tools {
  display: flex;
  flex: 1;
  justify-content: space-around;
  padding-top: 6px;
}

.p-surf .tools, .p-coupe .tools, .p-mesh .tools {
  justify-content: space-between;
  padding-left: 5px;
  padding-right: 6px;
}

.p-mesh .tools {
  padding-left: 12px;
}

.big {
  display: flex;
  flex-direction: column;
  align-items: center;
  align-self: flex-start;
  white-space: nowrap;
}

.big svg {
  width: 32px;
  height: 32px;
  margin-bottom: 4px;
}

.big .caret {
  margin-top: 3px;
}

.big text {
  font-size: 13px;
  text-anchor: middle;
  fill: #222;
}

.col {
  display: flex;
  flex-direction: column;
  gap: 8px;
}

.col button {
  display: flex;
  align-items: center;
  gap: 4px;
  height: 16px;
  white-space: nowrap;
}

.icons {
  display: grid;
  grid-template-columns: 16px 16px;
  gap: 8px;
  align-content: start;
}

.icons button {
  height: 16px;
}

.icons svg {
  display: block;
}

/* Drawing tabs */
.files {
  display: flex;
  align-items: flex-end;
  height: 29px;
  padding-left: 20px;
  background: #373737;
  border-bottom: 4px solid #5c5c5c;
}

.files a {
  display: flex;
  align-items: center;
  justify-content: space-between;
  width: 124px;
  height: 22px;
  padding: 0 12px;
  color: #b0b0b0;
  background: linear-gradient(#5a5a5a, #424242);
  border-radius: 10px 10px 0 0;
}

.files .active {
  color: #fff;
  background: linear-gradient(#8c8c8c, #5c5c5c);
}

.files span {
  color: #333;
}

.files button {
  width: 20px;
  height: 14px;
  margin: 0 0 4px 8px;
  font-size: 16px;
  line-height: 10px;
  background: #555;
  border-radius: 3px 3px 10px 3px;
}

main {
  display: flex;
  flex: 1;
  min-height: 0;
}

/* Palette */
.palette {
  display: flex;
  flex-direction: column;
  flex: none;
  width: 362px;
  background: #5c5c5c;
}

.palette h2 {
  height: 22px;
  width: 339px;
  padding-left: 15px;
  font-size: 12px;
  line-height: 22px;
  background: #4f4f4f;
  border-radius: 4px 4px 0 0;
}

.pal-body {
  display: flex;
  flex: 1;
  min-height: 0;
}

.pal-main {
  display: flex;
  flex-direction: column;
  width: 340px;
  padding: 9px 5px 0 5px;
}

.pal-tools {
  display: flex;
  align-items: center;
  gap: 7px;
  height: 24px;
  padding: 0 7px 0 4px;
}

.pal-tools button {
  width: 18px;
  height: 18px;
}

.pal-tools svg {
  display: block;
  width: 18px;
  height: 18px;
}

.pal-tools .on {
  width: 26px;
  height: 24px;
  padding: 2px 3px;
  background: #47617c;
  border: 1px solid #2d6da8;
}

.pal-tools .sep + .on {
  margin-left: -4px;
}

.grow {
  flex: 1;
}

.preview {
  display: flex;
  gap: 1px;
  margin-top: 17px;
}

.schema {
  width: 304px;
  height: 120px;
  background: #212830;
}

.schema p {
  padding: 8px 14px 0 0;
  font-size: 11px;
  text-align: right;
}

.schema .cur {
  margin-left: 8px;
  color: #f0b400;
}

.schema svg {
  width: 304px;
  height: 60px;
  margin-top: 18px;
}

.schema circle {
  fill: none;
  stroke: #b8b8b8;
}

.schema text {
  font-size: 10px;
  text-anchor: middle;
  fill: #f4f400;
}

.schema-btns button {
  display: block;
  width: 23px;
  height: 23px;
  margin-bottom: 1px;
  font-size: 12px;
  background: #404040;
  border: 1px solid #111;
  border-radius: 4px;
}

.thumbs {
  display: flex;
  align-items: center;
  gap: 1px;
  height: 78px;
  margin: 2px 0 1px 1px;
}

.thumbs button {
  height: 78px;
  background: #212830;
}

.thumbs button svg {
  display: block;
  width: 81px;
  height: 78px;
  fill: none;
}

.thumbs .diam {
  width: 26px;
  height: 26px;
  margin: 0 0 0 28px;
}

.diam text {
  font-size: 9px;
  fill: #357;
}

.thumbs .pitch {
  width: 80px;
  height: 64px;
  margin-left: 28px;
}

.pitch text {
  font-size: 7px;
}

.props {
  flex: 1;
  min-height: 0;
  overflow: hidden;
  margin-bottom: 5px;
  padding-right: 5px;
  border-right: 5px solid #484848;
}

table {
  width: 319px;
  margin-bottom: 3px;
  border-collapse: collapse;
  table-layout: fixed;
}

.c-name {
  width: 179px;
}

tr {
  height: 19px;
}

th, td {
  height: 19px;
  padding: 0 0 0 3px;
  font-weight: 400;
  line-height: 16px;
  text-align: left;
  white-space: nowrap;
  border: 1px solid #505050;
}

th {
  padding-left: 19px;
  color: #dcdcdc;
  border-left: none;
}

td svg {
  width: 18px;
  margin-right: 4px;
  vertical-align: top;
}

.cat th {
  padding-left: 2px;
  color: #fff;
  background: #4b4b4b;
  border: 1px solid #303030;
}

.strong th {
  font-weight: 700;
  background: #454545;
}

.first th {
  height: 23px;
}

.cat i {
  float: right;
  width: 6px;
  height: 2px;
  margin: 7px 9px 0 0;
  background: #fff;
}

.tall th, .tall td {
  height: 47px;
}

input[type=checkbox] {
  appearance: none;
  display: block;
  width: 13px;
  height: 13px;
  background: #fff;
  border: 1px solid #333;
}

input[type=checkbox]:checked::before {
  content: '✓';
  display: block;
  font-size: 12px;
  line-height: 11px;
  color: #222;
}

.edit th {
  color: #fff;
}

.edit td {
  padding: 0;
}

.combo {
  display: flex;
  height: 18px;
  background: #fff;
}

.combo svg {
  margin: 1px 0 0 1px;
}

.combo select {
  flex: 1;
  appearance: none;
  padding-left: 1px;
  line-height: 14px;
  color: #111;
  background: #a5c3f2;
  border: 1px solid #777;
}

.combo i {
  width: 22px;
  margin: 1px;
  background: #ddd;
  border: 1px solid #999;
}

.combo i::before {
  content: '';
  display: block;
  width: 0;
  margin: 5px auto;
  border: 4px solid transparent;
  border-top-color: #333;
  border-bottom: none;
}

.side-tabs {
  width: 20px;
  padding-top: 2px;
}

.side-tabs a {
  display: grid;
  place-items: center;
  height: 121px;
  writing-mode: vertical-rl;
  transform: rotate(180deg);
  color: #aaa;
  background: #525252;
  border: 1px solid #303030;
  border-radius: 4px 0 0 4px;
}

.side-tabs .active {
  color: #fff;
  background: #5c5c5c;
  border-right: none;
}

/* Model space */
.view {
  position: relative;
  flex: 1;
  min-width: 0;
  background: linear-gradient(#d9d9ef, #9f9faa);
  border-bottom: 1px solid #f0f0f0;
}

#scene {
  display: block;
  width: 100%;
  height: 100%;
}

#scene text {
  fill: #5b6068;
}

#scene .dir {
  fill: #dcdce2;
  stroke: #8e8e98;
}

.vp-label {
  position: absolute;
  left: 3px;
  top: 6px;
  font-size: 11px;
  color: #fff;
}

.vp-btns {
  position: absolute;
  right: 10px;
  top: 8px;
  display: flex;
  gap: 6px;
}

.vp-btns svg {
  display: block;
  width: 14px;
  height: 14px;
  fill: #f6f6f6;
  stroke: #444a58;
}

.cmd {
  position: absolute;
  left: 274px;
  right: 274px;
  bottom: 0;
  display: flex;
  align-items: center;
  height: 26px;
  padding-right: 2px;
  background: rgba(240,240,242,0.85);
  border: 1px solid #888;
  border-bottom: none;
}

.cmd-grip {
  display: flex;
  align-items: center;
  gap: 7px;
  width: 53px;
  height: 25px;
  padding-left: 3px;
  background: linear-gradient(#888, #666);
}

.cmd-grip b {
  width: 5px;
  height: 17px;
  background: repeating-linear-gradient(#bbb 0 1px, #777 1px 3px);
}

.cmd-grip button {
  font-size: 13px;
}

.prompt {
  height: 14px;
  margin: 0 3px 0 5px;
}

.cmd input {
  flex: 1;
  height: 24px;
  padding-left: 6px;
  font-family: 'DejaVu Sans Mono', monospace;
  font-size: 12px;
  font-style: italic;
  color: #333;
}

.cmd input::placeholder {
  color: #8c8c90;
}

/* Status bar */
footer {
  display: flex;
  justify-content: space-between;
  height: 30px;
  background: #373737;
}

.layouts {
  display: flex;
  align-items: flex-start;
  padding-left: 12px;
}

.layouts a {
  height: 18px;
  padding: 0 12px;
  line-height: 18px;
  color: #b0b0b0;
  background: linear-gradient(#4c4c4c, #6c6c6c);
  border-radius: 0 0 10px 10px;
}

.layouts .active {
  font-weight: 700;
  color: #fff;
  background: linear-gradient(#5c5c5c, #8a8a8a);
}

.layouts button {
  width: 24px;
  height: 16px;
  margin-left: 2px;
  font-size: 16px;
  line-height: 14px;
  background: #555;
  border-radius: 0 0 10px 4px;
}

.status {
  display: flex;
  gap: 1px;
  height: 29px;
  font-size: 12px;
}

.status output, .grp {
  display: flex;
  align-items: center;
  justify-content: space-around;
  gap: 8px;
  padding: 0 4px;
  background: #525252;
  border: 1px solid #7c7c7c;
  border-right: none;
}

.status output {
  width: 180px;
  padding: 0 5px 0 0;
  justify-content: flex-end;
}

.status .g7 {
  width: 174px;
  padding: 0 3px 0 0;
}

.status svg {
  color: #ccc;
}

.status .on {
  color: #2490ff;
}

.status .off {
  color: #909090;
}

.status .c-blue { color: #6fa8f0; }
.status .c-yel { color: #f0e070; }
.status .c-red { color: #f08080; }
```
FILE: scene.js
```js
const NS = 'http://www.w3.org/2000/svg';
const scene = document.getElementById('scene');

// vanishing points of the ground plane
const VX = [4833, -91];
const VY = [-247, -102];
const BASE = 1190;

function add(tag, attrs, text) {
  const el = document.createElementNS(NS, tag);
  for (const k in attrs) el.setAttribute(k, attrs[k]);
  if (text) el.textContent = text;
  scene.appendChild(el);
  return el;
}

function line(a, b, stroke, width = 1) {
  add('line', { x1: a[0], y1: a[1], x2: b[0], y2: b[1], stroke, 'stroke-width': width });
}

function cross(a, b, c, d) {
  const A = b[0] - a[0], B = b[1] - a[1], C = d[0] - c[0], D = d[1] - c[1];
  const t = ((c[0] - a[0]) * D - (c[1] - a[1]) * C) / (A * D - B * C);
  return [a[0] + A * t, a[1] + B * t];
}

// point at ratio k between a and b
function mix(a, b, k) {
  return [a[0] + (b[0] - a[0]) * k, a[1] + (b[1] - a[1]) * k];
}

// --- GRID ---
function drawGrid() {
  const ux = i => [1360 + 185 * i, BASE];
  const vy = j => [1638 + 107.3 * j, BASE];
  const far = ux(-40), right = vy(30);

  for (let i = -40; i <= 4; i++) {
    const start = cross(VX, ux(i), VY, right);
    const end = cross(VX, ux(i), [300, 0], [300, 100]);
    line(start, end, i % 5 ? 'rgba(85,85,115,0.42)' : 'rgba(60,60,90,0.65)');
  }
  for (let j = -13; j <= 30; j++) {
    const start = cross(VY, vy(j), VX, far);
    const end = cross(VY, vy(j), [0, 1300], [100, 1300]);
    line(start, end, j % 5 ? 'rgba(85,85,115,0.42)' : 'rgba(60,60,90,0.65)');
  }
}

// path through the points with rounded inner corners
function rounded(pts, r) {
  let d = `M${pts[0]}`;
  for (let i = 1; i < pts.length - 1; i++) {
    const [x, y] = pts[i];
    const near = (q) => {
      const l = Math.hypot(q[0] - x, q[1] - y);
      const k = Math.min(r, l / 2) / l;
      return [x + (q[0] - x) * k, y + (q[1] - y) * k];
    };
    d += `L${near(pts[i - 1])}Q${x},${y} ${near(pts[i + 1])}`;
  }
  return d + `L${pts[pts.length - 1]}`;
}

function rod(pts, width, colors, r = 22) {
  const d = rounded(pts, r);
  const base = { d, fill: 'none', 'stroke-linejoin': 'round' };
  add('path', { ...base, stroke: colors[0], 'stroke-width': width });
  add('path', { ...base, stroke: colors[1], 'stroke-width': width - 3, transform: 'translate(0,-1)' });
  add('path', { ...base, stroke: colors[2], 'stroke-width': 1.5 });
}

const BLACK = ['#000', '#080808', '#343434'];
const CYAN = ['#047a7c', '#06b4b4', '#4ce4e4'];

// [start, back corner, right corner, front corner, left corner, end]
const blackTies = [
  [[658, 281], [832, 268], [1029, 338], [845, 362], [664, 292], [737, 284]],
  [[668, 447], [837, 427], [1030, 525], [852, 558], [674, 457], [745, 447]],
  [[677, 565], [846, 542], [1030, 658], [858, 694], [682, 575], [752, 563]],
  [[685, 678], [850, 653], [1030, 783], [864, 825], [691, 689], [759, 672]],
  [[692, 787], [855, 759], [1031, 903], [868, 948], [697, 796], [763, 782]],
  [[699, 891], [863, 862], [1031, 1018], [874, 1069], [705, 902], [768, 884]]
];

const cyanTies = [
  [[752, 323], [1290, 270], [1394, 298], [846, 368], [758, 334], [838, 324]],
  [[762, 503], [1284, 431], [1383, 469], [853, 564], [767, 513], [845, 502]],
  [[769, 633], [1279, 546], [1376, 589], [859, 700], [774, 644], [850, 627]],
  [[776, 756], [1275, 656], [1369, 705], [864, 831], [781, 766], [853, 749]],
  [[780, 872], [1270, 761], [1363, 818], [868, 954], [789, 880], [858, 864]],
  [[786, 983], [1264, 861], [1357, 924], [874, 1075], [795, 993], [862, 973]]
];

// [x top, x bottom, y bottom, width]
const bars = [
  [817, 845, 886, 9], [1288, 1258, 888, 8], [1175, 1160, 916, 9], [869, 891, 928, 9],
  [672, 719, 913, 10], [1055, 1054, 945, 10], [1385, 1341, 943, 9], [718, 762, 962, 10],
  [927, 943, 976, 11], [1268, 1239, 974, 10], [769, 809, 1005, 11], [1143, 1129, 1007, 10],
  [1008, 1014, 1041, 12], [843, 875, 1082, 12]
];

// far side of a tie and its overlap, hidden behind the bars
function tieBack(t, width, colors, r) {
  rod([t[0], t[1], mix(t[1], t[2], 0.96)], width, colors, r);
  rod([mix(t[4], t[5], 0.15), t[5]], width, colors, r);
}

// near side of a tie, in front of the bars
function tieFront(t, width, colors) {
  rod([mix(t[1], t[2], 0.93), t[2], t[3], t[4], mix(t[4], t[5], 0.2)], width, colors);
}

function drawBars() {
  bars.forEach(([xt, xb, yb, w]) => {
    line([xt, 178], [xb, yb], '#008a00', w);
    line([xt - 1, 178], [xb - 1, yb], '#00a000', w - 3);
    line([xt + 2, 178], [xb + 2, yb], '#48d648', 2);
    line([xb - w / 2, yb - 1], [xb + w / 2, yb - 1], '#00d800', 3);
  });
}

function drawBase() {
  const red = (pts, w, edge) => {
    const d = rounded(pts, 20);
    add('path', { d, fill: 'none', stroke: '#500', 'stroke-width': w + 1 });
    add('path', { d, fill: 'none', stroke: edge, 'stroke-width': w + 2, 'stroke-dasharray': '2 6' });
    add('path', { d, fill: 'none', stroke: '#980000', 'stroke-width': w });
  };
  red([[704, 913], [850, 877], [1032, 1040]], 4, '#111');
  red([[804, 1005], [1264, 881], [1356, 944]], 3, '#00d0d0');
  red([[1310, 912], [1358, 946], [1010, 1046]], 4, '#00d0d0');
  red([[990, 1002], [1032, 1040], [872, 1090], [705, 910]], 6, '#111');
  line([794, 1003], [794, 1020], '#00d0d0');
  line([786, 1012], [802, 1006], '#00d0d0');
}

function drawFrame() {
  const g = '#5c5c60';
  line([612, 178], [666, 909], g);
  line([1455, 178], [1400, 949], g);
  line([948, 178], [961, 945], g);
  line([1307, 178], [1266, 863], g);
  line([852, 1115], [1400, 949], g);
  line([666, 909], [852, 1115], g);
  line([666, 909], [865, 856], g);
  line([865, 856], [961, 945], g);
  line([961, 945], [1266, 863], g);
  line([1266, 863], [1400, 949], g);
}

function drawAxes() {
  line([952, 1162], [1437, 1005], '#f01010');
  const marks = [[952, 1162], [1098, 1114], [1218, 1076], [1330, 1040], [1437, 1005]];
  marks.forEach(([x, y]) => {
    line([x - 33, y - 29], [x + 35, y + 30], '#f4f400');
    line([x + 9, y - 24], [x - 9, y + 25], '#f4f400');
  });

  // UCS icon
  line([412, 1187], [405, 1160], '#1a9a3a', 6);
  line([413, 1187], [408, 1145], '#3a62c0', 6);
  line([413, 1187], [462, 1172], '#a83030', 6);
  line([413, 1185], [462, 1170], '#e08a8a', 2);
  line([415, 1185], [410, 1145], '#9fb8ea', 1);
  add('path', { d: 'M407 1130h11l-11 11h12', fill: 'none', stroke: '#2868e0', 'stroke-width': 1 });
  add('path', { d: 'M460 1157l12 11M472 1157l-12 11', fill: 'none', stroke: '#f03030' });

  line([1491, 185], [1555, 182], '#ff8080');
  line([1555, 182], [1618, 190], '#80ff80');
  line([1554, 182], [1551, 245], '#8080ff');
  add('path', { d: 'M1552 178h5v5h-5z', fill: '#fff', stroke: '#000' });
}

function drawCube() {
  add('ellipse', { cx: 1650, cy: 317, rx: 58, ry: 24, fill: 'none', stroke: 'rgba(220,220,236,0.7)', 'stroke-width': 10 });
  add('path', { d: 'M1580 222l7-8 7 8v6h-14z', fill: 'rgba(222,218,228,0.8)' });
  add('path', { d: 'M1618 262l40-6 25 11-43 8z', fill: '#e6e6ea' });
  add('path', { d: 'M1618 262l22 13 2 48-23-18z', fill: '#c9c9cf' });
  add('path', { d: 'M1640 275l43-8-1 46-40 10z', fill: '#dcdce0' });
  add('path', { d: 'M1618 262l22 13 43-8M1640 275l2 48M1618 262l40-6 25 11-1 46-40 10-23-18z', fill: 'none', stroke: '#8a8a92', 'stroke-dasharray': '4 2' });
  add('path', { d: 'M1636 271l13 1v11l-13 1z', fill: 'rgba(170,190,215,0.5)' });
  add('text', { x: 1647, y: 302, 'font-size': 10, 'font-weight': 700, transform: 'rotate(-9 1647 302)' }, 'FRONT');
  add('text', { x: 1623, y: 291, 'font-size': 7, 'font-weight': 700, transform: 'rotate(25 1623 291)' }, 'LEFT');
  add('text', { x: 1642, y: 266, 'font-size': 7, 'font-weight': 700, transform: 'rotate(175 1649 264)' }, 'TOP');
  add('text', { x: 1585, y: 331, 'font-size': 14, 'font-weight': 700, class: 'dir', transform: 'rotate(-20 1590 326)' }, 'W');
  add('text', { x: 1680, y: 343, 'font-size': 14, 'font-weight': 700, class: 'dir', transform: 'rotate(-50 1685 338)' }, 'S');
  add('text', { x: 1693, y: 305, 'font-size': 12, 'font-weight': 700, class: 'dir', transform: 'rotate(60 1697 300)' }, 'E');
  add('rect', { x: 1626, y: 374, width: 48, height: 17, rx: 4, fill: 'rgba(225,225,240,0.6)' });
  add('text', { x: 1630, y: 386, 'font-size': 11 }, 'WCS');
  add('path', { d: 'M1660 380h8l-4 5z', fill: 'none', stroke: '#888' });
  add('path', { d: 'M1711 350h10l-5 5zM1711 347h10', fill: '#e2e2ea', stroke: '#d5d5de' });
}

drawGrid();
drawFrame();
drawBase();
cyanTies.forEach(t => tieBack(t, 8, CYAN));
blackTies.forEach(t => tieBack(t, 8, BLACK, 16));
drawBars();
cyanTies.forEach(t => tieFront(t, 9, CYAN));
blackTies.forEach(t => tieFront(t, 9, BLACK));
drawAxes();
drawCube();
```
